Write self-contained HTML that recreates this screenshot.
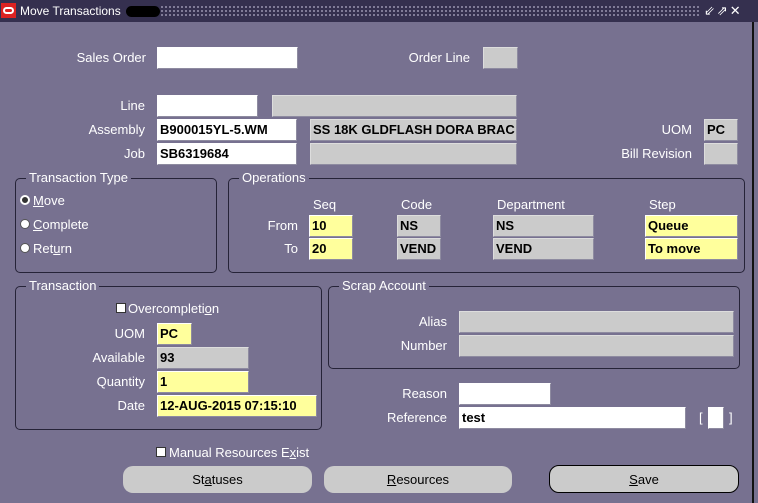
<!DOCTYPE html>
<html><head><meta charset="utf-8"><style>
*{box-sizing:border-box;margin:0;padding:0}
body{width:758px;height:503px;overflow:hidden;background:#777190;font-family:"Liberation Sans",sans-serif;font-size:13px;color:#fff;position:relative}
.tb{position:absolute;left:0;top:0;width:758px;height:22px;background:#35304f;}
.dots{position:absolute;left:160px;top:5px;width:540px;height:12px;background-image:radial-gradient(#9a96b0 0.8px,transparent 1px);background-size:4px 4px}
.l{position:absolute;text-align:right;width:140px;line-height:14px}
.f{position:absolute;height:22px;border:1px solid;border-color:#fff #8e8ba0 #8e8ba0 #fff;background:#fff;color:#000;font-weight:bold;padding-left:2px;line-height:20px;font-size:13px;white-space:nowrap;overflow:hidden}
.g{background:#cbcbcb;border-color:#ddd #8e8ba0 #8e8ba0 #ddd}
.y{background:#ffff9c}
.w{background:#fff}
.box{position:absolute;border:1px solid #262338;border-radius:5px}
.bt{position:absolute;top:-8px;left:10px;background:#777190;padding:0 3px;line-height:14px}
.rad{position:absolute;width:10px;height:10px;border-radius:50%;background:#fff;border:1px solid #555}
.cb{position:absolute;width:10px;height:10px;background:#fff;border:1px solid #333}
.btn{position:absolute;height:27px;background:#cbcbcb;border-radius:10px;color:#000;text-align:center;line-height:27px;font-size:13px}
u{text-decoration:underline}
</style></head><body>
<div class="tb"><div style="position:absolute;left:1px;top:3px;width:15px;height:15px;background:#d22;"><div style="position:absolute;left:2px;top:4px;width:11px;height:7px;border:2px solid #fff;border-radius:4px"></div></div>
<div style="position:absolute;left:20px;top:4px;line-height:14px;font-size:12px">Move Transactions</div>
<div style="position:absolute;left:126px;top:6px;width:34px;height:11px;background:#000;border-radius:6px"></div>
<div class="dots"></div>
<div style="position:absolute;left:704px;top:3px;font-size:13px;line-height:15px;letter-spacing:2px">⇙⇗✕</div></div>
<div style="position:absolute;left:752px;top:22px;width:2px;height:481px;background:#111"></div>

<div class="l" style="left:6px;top:51px">Sales Order</div><div class="f w" style="left:157px;top:47px;width:141px"></div>
<div class="l" style="left:330px;top:51px">Order Line</div><div class="f g" style="left:483px;top:47px;width:35px"></div>

<div class="l" style="left:5px;top:99px">Line</div><div class="f w" style="left:157px;top:95px;width:101px"></div><div class="f g" style="left:272px;top:95px;width:245px"></div>
<div class="l" style="left:5px;top:123px">Assembly</div><div class="f w" style="left:157px;top:119px;width:140px">B900015YL-5.WM</div><div class="f g" style="left:310px;top:119px;width:207px">SS 18K GLDFLASH DORA BRAC</div>
<div class="l" style="left:552px;top:123px">UOM</div><div class="f g" style="left:704px;top:119px;width:34px">PC</div>
<div class="l" style="left:5px;top:147px">Job</div><div class="f w" style="left:157px;top:143px;width:140px">SB6319684</div><div class="f g" style="left:310px;top:143px;width:207px"></div>
<div class="l" style="left:552px;top:147px">Bill Revision</div><div class="f g" style="left:704px;top:143px;width:34px"></div>

<div class="box" style="left:15px;top:178px;width:202px;height:95px"><div class="bt">Transaction Type</div></div>
<div class="rad" style="left:20px;top:195px;background:#333;border:2px solid #fff"></div><div style="position:absolute;left:33px;top:194px;line-height:14px"><u>M</u>ove</div>
<div class="rad" style="left:20px;top:219px"></div><div style="position:absolute;left:33px;top:218px;line-height:14px"><u>C</u>omplete</div>
<div class="rad" style="left:20px;top:243px"></div><div style="position:absolute;left:33px;top:242px;line-height:14px">Ret<u>u</u>rn</div>

<div class="box" style="left:228px;top:178px;width:517px;height:95px"><div class="bt">Operations</div></div>
<div style="position:absolute;left:313px;top:198px;line-height:14px">Seq</div>
<div style="position:absolute;left:401px;top:198px;line-height:14px">Code</div>
<div style="position:absolute;left:497px;top:198px;line-height:14px">Department</div>
<div style="position:absolute;left:649px;top:198px;line-height:14px">Step</div>
<div class="l" style="left:158px;top:219px">From</div>
<div class="f y" style="left:309px;top:215px;width:44px">10</div><div class="f g" style="left:397px;top:215px;width:44px">NS</div><div class="f g" style="left:493px;top:215px;width:101px">NS</div><div class="f y" style="left:645px;top:215px;width:93px">Queue</div>
<div class="l" style="left:158px;top:242px">To</div>
<div class="f y" style="left:309px;top:238px;width:44px">20</div><div class="f g" style="left:397px;top:238px;width:44px">VEND</div><div class="f g" style="left:493px;top:238px;width:101px">VEND</div><div class="f y" style="left:645px;top:238px;width:93px">To move</div>

<div class="box" style="left:15px;top:286px;width:307px;height:144px"><div class="bt">Transaction</div></div>
<div class="cb" style="left:116px;top:303px"></div><div style="position:absolute;left:128px;top:302px;line-height:14px">Overcompleti<u>o</u>n</div>
<div class="l" style="left:5px;top:327px">UOM</div><div class="f y" style="left:157px;top:323px;width:35px">PC</div>
<div class="l" style="left:5px;top:351px">Available</div><div class="f g" style="left:157px;top:347px;width:92px">93</div>
<div class="l" style="left:5px;top:375px">Quantity</div><div class="f y" style="left:157px;top:371px;width:92px">1</div>
<div class="l" style="left:5px;top:399px">Date</div><div class="f y" style="left:157px;top:395px;width:160px">12-AUG-2015 07:15:10</div>

<div class="box" style="left:328px;top:286px;width:412px;height:83px"><div class="bt">Scrap Account</div></div>
<div class="l" style="left:307px;top:315px">Alias</div><div class="f g" style="left:459px;top:311px;width:275px"></div>
<div class="l" style="left:307px;top:339px">Number</div><div class="f g" style="left:459px;top:335px;width:275px"></div>
<div class="l" style="left:307px;top:387px">Reason</div><div class="f w" style="left:459px;top:383px;width:92px"></div>
<div class="l" style="left:307px;top:411px">Reference</div><div class="f w" style="left:459px;top:407px;width:227px">test</div>
<div style="position:absolute;left:699px;top:411px;line-height:14px">[</div><div class="f w" style="left:708px;top:407px;width:16px"></div><div style="position:absolute;left:729px;top:411px;line-height:14px">]</div>

<div class="cb" style="left:156px;top:447px"></div><div style="position:absolute;left:169px;top:446px;line-height:14px">Manual Resources E<u>x</u>ist</div>
<div class="btn" style="left:123px;top:466px;width:189px">St<u>a</u>tuses</div>
<div class="btn" style="left:324px;top:466px;width:188px"><u>R</u>esources</div>
<div class="btn" style="left:549px;top:465px;width:190px;height:28px;border:1px solid #000"><u>S</u>ave</div>
</body></html>
